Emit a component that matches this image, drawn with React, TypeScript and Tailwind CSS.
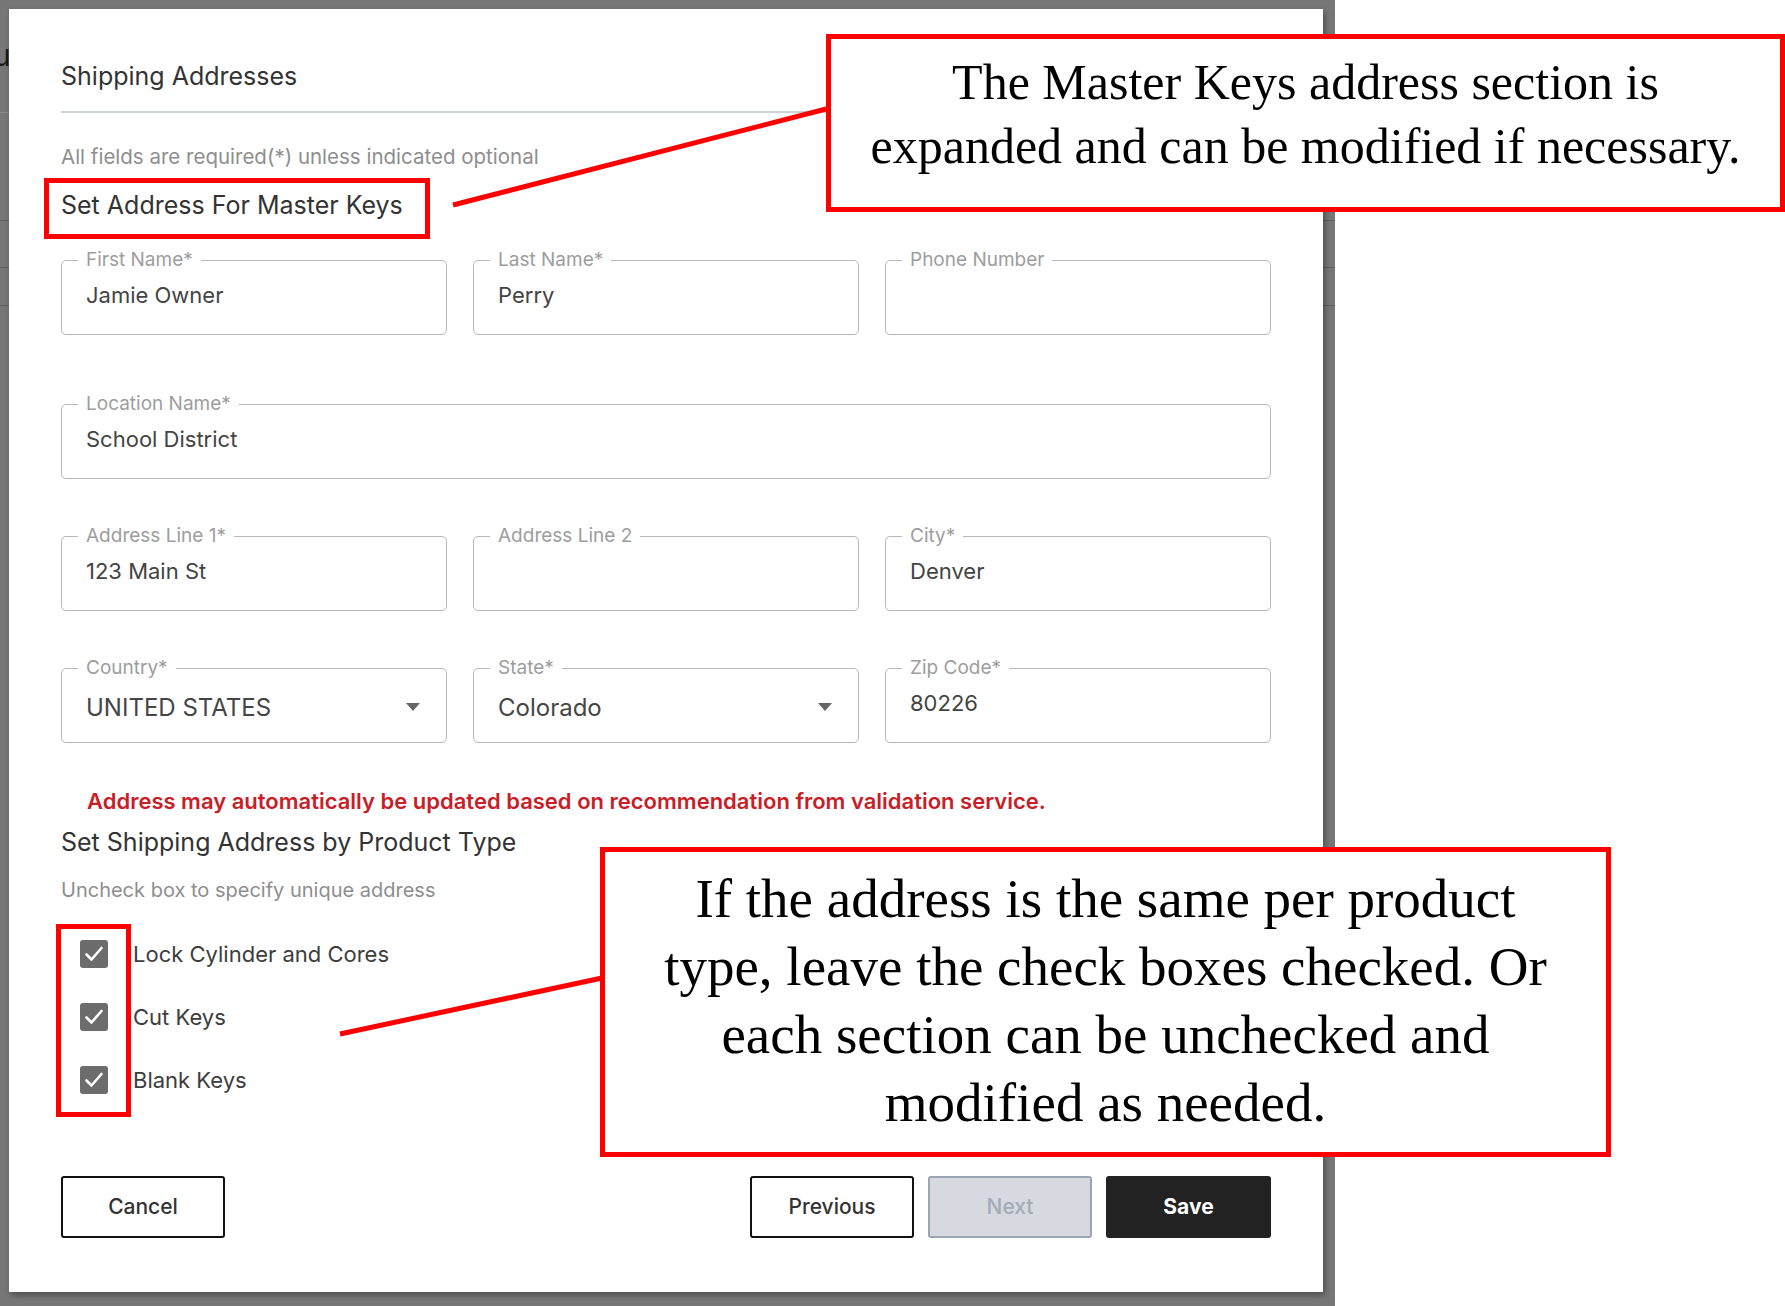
import React from "react";

const ui = { fontFamily: "Inter, 'Open Sans', Arial, sans-serif" } as React.CSSProperties;
const serif = { fontFamily: "'Liberation Serif', 'Times New Roman', serif" } as React.CSSProperties;

function Field({
  label,
  value,
  select,
}: {
  label: string;
  value?: string;
  select?: boolean;
}) {
  return (
    <div className="relative h-[75px] border-[1.5px] border-[#b8b8b8] rounded-[5px] flex items-center justify-between pl-[24px] pr-[26px]">
      <span className="absolute left-[16px] top-[-12px] px-[8px] bg-white text-[19px] leading-[22px] text-[#9d9d9d] whitespace-nowrap">
        {label}
      </span>
      {select ? (
        <>
          <span className="pt-[4px] text-[24px] leading-[29px] text-[#454545] whitespace-nowrap">{value}</span>
          <svg width="14" height="8" viewBox="0 0 14 8" className="mt-[3px]">
            <path d="M0 0 L14 0 L7 8 Z" fill="#666" />
          </svg>
        </>
      ) : (
        <span className="pb-[4px] text-[22px] leading-[27px] text-[#444] whitespace-nowrap">{value}</span>
      )}
    </div>
  );
}

function Check({ label }: { label: string }) {
  return (
    <div className="flex items-center h-[28px]">
      <div className="ml-[19px] w-[28px] h-[28px] rounded-[3px] bg-[#6c6c6c] flex items-center justify-center">
        <svg width="28" height="28" viewBox="0 0 28 28">
          <polyline points="6.5,14.5 11.5,19.5 21.5,8" fill="none" stroke="#fff" strokeWidth="2.6" strokeLinecap="round" strokeLinejoin="round" />
        </svg>
      </div>
      <span className="ml-[25px] text-[22px] leading-[28px] text-[#3d3d3d] whitespace-nowrap">{label}</span>
    </div>
  );
}

export default function App() {
  return (
    <div className="relative w-[1785px] h-[1306px] bg-white overflow-hidden" style={ui}>
      <div className="flex h-full">
        {/* backdrop */}
        <div className="relative w-[1335px] h-full bg-[#777777] pl-[9px] pt-[9px] overflow-hidden">
          <span className="absolute left-[-7px] top-[40px] text-[30px] leading-[30px] text-[#1a1a1a]">u</span>
          <div className="absolute left-0 top-[112px] w-[9px] h-[1px] bg-[#8a8a8a]" />
          <div className="absolute left-0 top-[220px] w-[9px] h-[1px] bg-[#5f5f5f]" />
          <div className="absolute left-0 top-[267px] w-[9px] h-[1px] bg-[#5f5f5f]" />
          <div className="absolute left-0 top-[305px] w-[9px] h-[1px] bg-[#5f5f5f]" />
          <div className="absolute right-0 top-[220px] w-[12px] h-[1px] bg-[#5f5f5f]" />
          <div className="absolute right-0 top-[267px] w-[12px] h-[1px] bg-[#5f5f5f]" />
          <div className="absolute right-0 top-[305px] w-[12px] h-[1px] bg-[#5f5f5f]" />

          {/* modal */}
          <div className="relative w-[1314px] h-[1283px] bg-white shadow-[2px_3px_6px_rgba(0,0,0,0.35)] pl-[52px] pr-[52px] pt-[51px] flex flex-col">
            <div className="text-[25px] leading-[32px] text-[#333]">Shipping Addresses</div>
            <div className="mt-[19px] h-[2px] bg-[#cdd1d8]" />
            <div className="mt-[31px] text-[20.5px] leading-[26px] text-[#8e8e8e]">
              All fields are required(*) unless indicated optional
            </div>
            <div className="mt-[19px] text-[25px] leading-[32px] text-[#333]">Set Address For Master Keys</div>

            <div className="mt-[39px] grid grid-cols-3 gap-x-[26px]">
              <Field label="First Name*" value="Jamie Owner" />
              <Field label="Last Name*" value="Perry" />
              <Field label="Phone Number" />
            </div>

            <div className="mt-[69px]">
              <Field label="Location Name*" value="School District" />
            </div>

            <div className="mt-[57px] grid grid-cols-3 gap-x-[26px]">
              <Field label="Address Line 1*" value="123 Main St" />
              <Field label="Address Line 2" />
              <Field label="City*" value="Denver" />
            </div>

            <div className="mt-[57px] grid grid-cols-3 gap-x-[26px]">
              <Field label="Country*" value="UNITED STATES" select />
              <Field label="State*" value="Colorado" select />
              <Field label="Zip Code*" value="80226" />
            </div>

            <div className="mt-[45px] pl-[26px] text-[22px] leading-[26px] font-semibold text-[#c81e28] whitespace-nowrap">
              Address may automatically be updated based on recommendation from validation service.
            </div>
            <div className="mt-[12px] text-[25px] leading-[32px] text-[#333]">Set Shipping Address by Product Type</div>
            <div className="mt-[19px] text-[20px] leading-[26px] text-[#8e8e8e]">Uncheck box to specify unique address</div>

            <div className="mt-[37px] flex flex-col gap-[35px]">
              <Check label="Lock Cylinder and Cores" />
              <Check label="Cut Keys" />
              <Check label="Blank Keys" />
            </div>

            <div className="mt-[82px] flex justify-between">
              <button className="w-[164px] h-[62px] border-[2.5px] border-[#111] rounded-[3px] bg-white text-[21px] font-medium text-[#333]">
                Cancel
              </button>
              <div className="flex gap-[14px]">
                <button className="w-[164px] h-[62px] border-[2.5px] border-[#111] rounded-[3px] bg-white text-[21px] font-medium text-[#333]">
                  Previous
                </button>
                <button className="w-[164px] h-[62px] border-[2px] border-[#9ca5b3] rounded-[3px] bg-[#d6d9df] text-[21px] font-medium text-[#a4abb7]">
                  Next
                </button>
                <button className="w-[165px] h-[62px] rounded-[3px] bg-[#222] text-[21px] font-bold text-white">
                  Save
                </button>
              </div>
            </div>
          </div>
        </div>
        <div className="flex-1 bg-white" />
      </div>

      {/* annotations */}
      <svg className="absolute left-0 top-0 pointer-events-none" width="1785" height="1306">
        <line x1="453" y1="205" x2="830" y2="108" stroke="#ff0000" strokeWidth="5" />
        <line x1="340" y1="1034" x2="602" y2="978" stroke="#ff0000" strokeWidth="5" />
      </svg>

      <div className="absolute left-[44px] top-[178px] w-[386px] h-[61px] border-[5px] border-[#ff0000]" />
      <div className="absolute left-[56px] top-[924px] w-[75px] h-[193px] border-[5px] border-[#ff0000]" />

      <div
        className="absolute left-[826px] top-[34px] w-[959px] h-[178px] border-[5px] border-[#ff0000] bg-white pt-[11px] text-center text-black text-[50px] leading-[64px] whitespace-nowrap"
        style={serif}
      >
        The Master Keys address section is
        <br />
        expanded and can be modified if necessary.
      </div>

      <div
        className="absolute left-[600px] top-[847px] w-[1011px] h-[310px] border-[5px] border-[#ff0000] bg-white pt-[13px] text-center text-black text-[55px] leading-[68px] whitespace-nowrap"
        style={serif}
      >
        If the address is the same per product
        <br />
        type, leave the check boxes checked. Or
        <br />
        each section can be unchecked and
        <br />
        modified as needed.
      </div>
    </div>
  );
}
